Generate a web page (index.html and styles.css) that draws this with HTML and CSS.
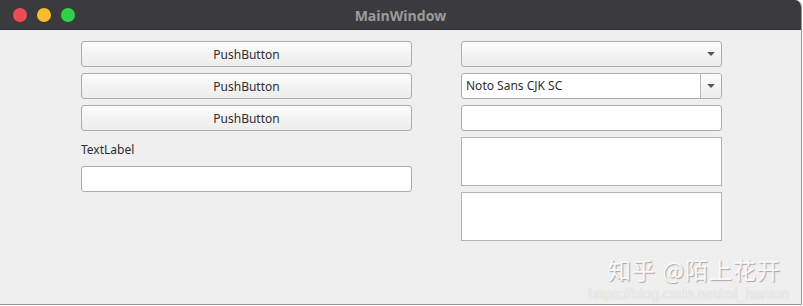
FILE: index.html
```html
<!DOCTYPE html>
<html lang="en">
<head>
    <meta charset="UTF-8">
    <title>MainWindow</title>
    <link rel="stylesheet" href="styles.css">
</head>
<body>
<div class="window">
    <div class="titlebar">
        <div class="lights">
            <span class="light red"></span>
            <span class="light yellow"></span>
            <span class="light green"></span>
        </div>
        <div class="title">MainWindow</div>
    </div>

    <div class="content">
        <div class="col left">
            <button class="push">PushButton</button>
            <button class="push">PushButton</button>
            <button class="push">PushButton</button>
            <div class="label">TextLabel</div>
            <input type="text" class="line">
        </div>

        <div class="col right">
            <div class="combo">
                <span class="combo-text"></span>
                <span class="arrow"></span>
            </div>
            <div class="combo editable">
                <span class="combo-text">Noto Sans CJK SC</span>
                <span class="arrow"></span>
            </div>
            <input type="text" class="line">
            <div class="textedit"></div>
            <div class="textedit"></div>
        </div>
    </div>

    <div class="watermark">
        <div class="wm-big">知乎 @陌上花开</div>
        <div class="wm-small">https://blog.csdn.net/ml_hanlon</div>
    </div>
</div>
</body>
</html>
```

FILE: styles.css
```css
html, body { margin: 0; padding: 0; background: #fafafa; }
body { font-family: "Noto Sans", "Noto Sans CJK SC", sans-serif; font-size: 12px; color: #2e2e2e; }

.window { position: relative; width: 801px; height: 304px; background: #efefef; border-right: 1px solid #9a9a9a; border-bottom: 1px solid #9a9a9a; border-top-right-radius: 7px; overflow: hidden; }

.titlebar { position: relative; height: 30px; background: #3b3b3d; border-bottom: 1px solid #2c2c2e; box-sizing: border-box; display: flex; align-items: center; justify-content: center; }
.lights { position: absolute; left: 13px; top: 8px; display: flex; gap: 10px; }
.light { width: 14px; height: 14px; border-radius: 50%; }
.red { background: #ee4b55; }
.yellow { background: #f9bd2c; }
.green { background: #2ed249; }
.title { font-family: "Open Sans", sans-serif; font-weight: bold; font-size: 14px; color: #9b9b9b; padding-top: 1px; }

.content { display: flex; padding: 11px 0 0 81px; gap: 49px; }
.col { display: flex; flex-direction: column; }
.left { width: 331px; gap: 6px; }
.right { width: 261px; gap: 6px; }

.push { height: 26px; border: 1px solid #adadad; border-radius: 3px; background: linear-gradient(#fcfcfc, #ececec); font-family: inherit; font-size: 12px; color: #2e2e2e; padding: 0; }

.label { height: 23px; line-height: 26px; }

.line { height: 26px; box-sizing: border-box; border: 1px solid #acacac; border-radius: 3px; background: #fff; margin: 0; padding: 0 4px; }

.combo { height: 26px; box-sizing: border-box; border: 1px solid #adadad; border-radius: 3px; background: linear-gradient(#fcfcfc, #ececec); display: flex; align-items: center; }
.combo-text { flex: 1; padding-left: 4px; line-height: 24px; }
.arrow { width: 20px; height: 24px; display: flex; align-items: center; justify-content: center; }
.arrow::after { content: ""; border-left: 4px solid transparent; border-right: 4px solid transparent; border-top: 4px solid #5a5a5a; }
.editable { background: #fff; }
.editable .arrow { border-left: 1px solid #b8b8b8; background: linear-gradient(#fcfcfc, #ececec); border-radius: 0 2px 2px 0; }

.textedit { height: 49px; box-sizing: border-box; border: 1px solid #b4b4b4; background: #fff; }

.watermark { position: absolute; right: 12px; bottom: 2px; text-align: right; color: rgba(255,255,255,0.9); }
.wm-big { font-family: "Noto Sans CJK SC", sans-serif; font-size: 23px; letter-spacing: 1px; text-shadow: 1px 1px 1px rgba(80,80,80,0.45); margin-right: 8px; }
.wm-small { font-family: "Liberation Sans", sans-serif; font-size: 14.5px; line-height: 16px; color: rgba(255,255,255,0.7); text-shadow: 0 0 1px rgba(120,120,120,0.4); }
```
